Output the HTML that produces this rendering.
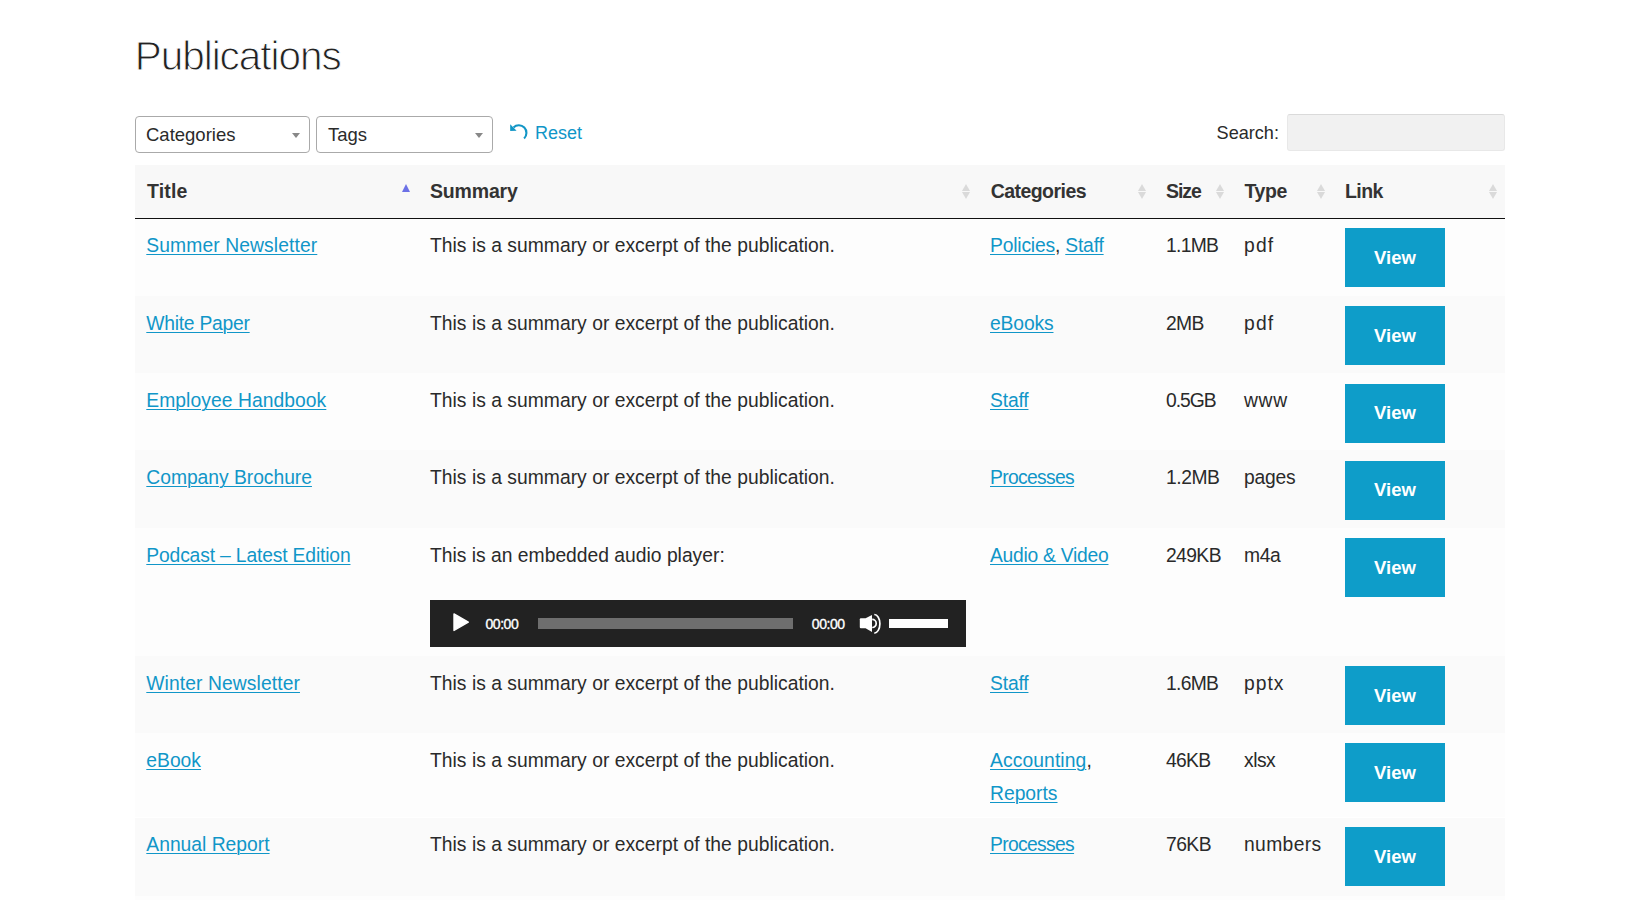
<!DOCTYPE html>
<html><head><meta charset="utf-8"><style>
html,body{margin:0;padding:0;background:#fff;width:1640px;height:900px;overflow:hidden;position:relative}
body{font-family:"Liberation Sans",sans-serif;color:#2a2a2a}
.ab{position:absolute}
.t{position:absolute;white-space:nowrap;line-height:1}
.h1{color:#222;-webkit-text-stroke:1px #fff}
.b{font-weight:bold;color:#333}
.w{color:#fff}
.lnk{color:#1096c8}
.u{color:#1096c8;text-decoration:underline;text-underline-offset:1.5px;text-decoration-thickness:1px}
.nou .u{text-decoration:none}
.sel{position:absolute;border:1px solid #aaa;border-radius:4px;background:#fff}
.inp{position:absolute;border:1px solid #e8e8e8;border-top-color:#dadada;border-radius:3px;background:#f1f1f1}
.arr{position:absolute;width:0;height:0;border-left:4.5px solid transparent;border-right:4.5px solid transparent;border-top:5.5px solid #888}
.btn{position:absolute;width:100px;height:59px;background:#0e9dc9}
</style></head><body>
<div class="t h1" style="left:134.8px;top:35.72px;font-size:40.5px;letter-spacing:-1.05px">Publications</div>
<div class="sel" style="left:135px;top:116px;width:173px;height:35px"></div>
<div class="sel" style="left:316px;top:116px;width:175px;height:35px"></div>
<div class="t " style="left:146px;top:125.94px;font-size:18.5px;">Categories</div>
<div class="t " style="left:328px;top:125.94px;font-size:18.5px;">Tags</div>
<div class="arr" style="left:292px;top:132.5px"></div>
<div class="arr" style="left:475px;top:132.5px"></div>
<svg class="ab" style="left:505px;top:118px" width="30" height="25" viewBox="0 0 30 25"><path d="M8.5 9.4 A7.6 7.6 0 1 1 19.1 20.4" fill="none" stroke="#1296c6" stroke-width="2.1"/><path d="M5.2 6.2 L5.2 12.9 L11.6 12.7 Z" fill="#1296c6"/></svg>
<div class="t lnk nou" style="left:535px;top:123.96px;font-size:18px;">Reset</div>
<div class="t " style="left:1216.6px;top:124.28px;font-size:18.1px;">Search:</div>
<div class="inp" style="left:1287px;top:113.7px;width:216px;height:35px"></div>
<div class="ab" style="left:135px;top:165.4px;width:1370px;height:52.6px;background:#f8f8f8"></div>
<div class="ab" style="left:135px;top:218px;width:1370px;height:1px;background:#111"></div>
<div class="t b" style="left:147px;top:181.99px;font-size:19.5px;letter-spacing:0.15px">Title</div>
<div class="t b" style="left:430px;top:181.99px;font-size:19.5px;letter-spacing:-0.17px">Summary</div>
<div class="t b" style="left:990.7px;top:181.99px;font-size:19.5px;letter-spacing:-0.55px">Categories</div>
<div class="t b" style="left:1166px;top:181.99px;font-size:19.5px;letter-spacing:-1.05px">Size</div>
<div class="t b" style="left:1244.4px;top:181.99px;font-size:19.5px;letter-spacing:-0.35px">Type</div>
<div class="t b" style="left:1345px;top:181.99px;font-size:19.5px;letter-spacing:-0.55px">Link</div>
<div class="ab" style="left:402.4px;top:184.4px;width:0;height:0;border-left:4.6px solid transparent;border-right:4.6px solid transparent;border-bottom:8px solid #6c71e6"></div>
<div class="ab" style="left:962.1px;top:183.5px;width:0;height:0;border-left:4.9px solid transparent;border-right:4.9px solid transparent;border-bottom:7px solid #dadada"></div>
<div class="ab" style="left:962.1px;top:192.3px;width:0;height:0;border-left:4.9px solid transparent;border-right:4.9px solid transparent;border-top:7px solid #dadada"></div>
<div class="ab" style="left:1137.8px;top:183.5px;width:0;height:0;border-left:4.9px solid transparent;border-right:4.9px solid transparent;border-bottom:7px solid #dadada"></div>
<div class="ab" style="left:1137.8px;top:192.3px;width:0;height:0;border-left:4.9px solid transparent;border-right:4.9px solid transparent;border-top:7px solid #dadada"></div>
<div class="ab" style="left:1216.1px;top:183.5px;width:0;height:0;border-left:4.9px solid transparent;border-right:4.9px solid transparent;border-bottom:7px solid #dadada"></div>
<div class="ab" style="left:1216.1px;top:192.3px;width:0;height:0;border-left:4.9px solid transparent;border-right:4.9px solid transparent;border-top:7px solid #dadada"></div>
<div class="ab" style="left:1317.1px;top:183.5px;width:0;height:0;border-left:4.9px solid transparent;border-right:4.9px solid transparent;border-bottom:7px solid #dadada"></div>
<div class="ab" style="left:1317.1px;top:192.3px;width:0;height:0;border-left:4.9px solid transparent;border-right:4.9px solid transparent;border-top:7px solid #dadada"></div>
<div class="ab" style="left:1489.1px;top:183.5px;width:0;height:0;border-left:4.9px solid transparent;border-right:4.9px solid transparent;border-bottom:7px solid #dadada"></div>
<div class="ab" style="left:1489.1px;top:192.3px;width:0;height:0;border-left:4.9px solid transparent;border-right:4.9px solid transparent;border-top:7px solid #dadada"></div>
<div class="ab" style="left:135px;top:219.4px;width:1370px;height:76.2px;background:#fdfdfd"></div>
<div class="t lnk" style="left:146.3px;top:236.26px;font-size:19.3px;letter-spacing:0.1px"><span class="u">Summer Newsletter</span></div>
<div class="t " style="left:430px;top:236.26px;font-size:19.3px;letter-spacing:0.02px">This is a summary or excerpt of the publication.</div>
<div class="t " style="left:990px;top:236.26px;font-size:19.3px;letter-spacing:-0.19px"><span class="u">Policies</span>, <span class="u">Staff</span></div>
<div class="t " style="left:1166px;top:236.26px;font-size:19.3px;letter-spacing:-0.72px">1.1MB</div>
<div class="t " style="left:1244px;top:236.26px;font-size:19.3px;letter-spacing:1.2px">pdf</div>
<div class="btn" style="left:1345px;top:228.4px"></div>
<div class="t b w" style="left:1374px;top:249.24px;font-size:18.5px;">View</div>
<div class="ab" style="left:135px;top:295.6px;width:1370px;height:77.4px;background:#fafafa"></div>
<div class="t lnk" style="left:146.3px;top:313.76px;font-size:19.3px;letter-spacing:-0.25px"><span class="u">White Paper</span></div>
<div class="t " style="left:430px;top:313.76px;font-size:19.3px;letter-spacing:0.02px">This is a summary or excerpt of the publication.</div>
<div class="t " style="left:990px;top:313.76px;font-size:19.3px;letter-spacing:-0.14px"><span class="u">eBooks</span></div>
<div class="t " style="left:1166px;top:313.76px;font-size:19.3px;letter-spacing:-0.7px">2MB</div>
<div class="t " style="left:1244px;top:313.76px;font-size:19.3px;letter-spacing:1.2px">pdf</div>
<div class="btn" style="left:1345px;top:305.9px"></div>
<div class="t b w" style="left:1374px;top:326.74px;font-size:18.5px;">View</div>
<div class="ab" style="left:135px;top:373px;width:1370px;height:77.2px;background:#fdfdfd"></div>
<div class="t lnk" style="left:146.3px;top:391.36px;font-size:19.3px;letter-spacing:0.06px"><span class="u">Employee Handbook</span></div>
<div class="t " style="left:430px;top:391.36px;font-size:19.3px;letter-spacing:0.02px">This is a summary or excerpt of the publication.</div>
<div class="t " style="left:990px;top:391.36px;font-size:19.3px;letter-spacing:-0.17px"><span class="u">Staff</span></div>
<div class="t " style="left:1166px;top:391.36px;font-size:19.3px;letter-spacing:-1.0px">0.5GB</div>
<div class="t " style="left:1244px;top:391.36px;font-size:19.3px;letter-spacing:0.7px">www</div>
<div class="btn" style="left:1345px;top:383.5px"></div>
<div class="t b w" style="left:1374px;top:404.34px;font-size:18.5px;">View</div>
<div class="ab" style="left:135px;top:450.2px;width:1370px;height:77.8px;background:#fafafa"></div>
<div class="t lnk" style="left:146.3px;top:468.46px;font-size:19.3px;letter-spacing:-0.03px"><span class="u">Company Brochure</span></div>
<div class="t " style="left:430px;top:468.46px;font-size:19.3px;letter-spacing:0.02px">This is a summary or excerpt of the publication.</div>
<div class="t " style="left:990px;top:468.46px;font-size:19.3px;letter-spacing:-0.66px"><span class="u">Processes</span></div>
<div class="t " style="left:1166px;top:468.46px;font-size:19.3px;letter-spacing:-0.45px">1.2MB</div>
<div class="t " style="left:1244px;top:468.46px;font-size:19.3px;letter-spacing:-0.25px">pages</div>
<div class="btn" style="left:1345px;top:460.6px"></div>
<div class="t b w" style="left:1374px;top:481.44px;font-size:18.5px;">View</div>
<div class="ab" style="left:135px;top:528px;width:1370px;height:127.8px;background:#fdfdfd"></div>
<div class="t lnk" style="left:146.3px;top:545.66px;font-size:19.3px;letter-spacing:-0.157px"><span class="u">Podcast – Latest Edition</span></div>
<div class="t " style="left:430px;top:545.66px;font-size:19.3px;">This is an embedded audio player:</div>
<div class="t " style="left:990px;top:545.66px;font-size:19.3px;letter-spacing:-0.26px"><span class="u">Audio &amp; Video</span></div>
<div class="t " style="left:1166px;top:545.66px;font-size:19.3px;letter-spacing:-0.6px">249KB</div>
<div class="t " style="left:1244px;top:545.66px;font-size:19.3px;letter-spacing:-0.4px">m4a</div>
<div class="btn" style="left:1345px;top:537.8px"></div>
<div class="t b w" style="left:1374px;top:558.64px;font-size:18.5px;">View</div>
<div class="ab" style="left:135px;top:655.8px;width:1370px;height:76.8px;background:#fafafa"></div>
<div class="t lnk" style="left:146.3px;top:673.66px;font-size:19.3px;letter-spacing:0.09px"><span class="u">Winter Newsletter</span></div>
<div class="t " style="left:430px;top:673.66px;font-size:19.3px;letter-spacing:0.02px">This is a summary or excerpt of the publication.</div>
<div class="t " style="left:990px;top:673.66px;font-size:19.3px;letter-spacing:-0.17px"><span class="u">Staff</span></div>
<div class="t " style="left:1166px;top:673.66px;font-size:19.3px;letter-spacing:-0.72px">1.6MB</div>
<div class="t " style="left:1244px;top:673.66px;font-size:19.3px;letter-spacing:1.0px">pptx</div>
<div class="btn" style="left:1345px;top:665.8px"></div>
<div class="t b w" style="left:1374px;top:686.64px;font-size:18.5px;">View</div>
<div class="ab" style="left:135px;top:732.6px;width:1370px;height:84.9px;background:#fdfdfd"></div>
<div class="t lnk" style="left:146.3px;top:751.06px;font-size:19.3px;"><span class="u">eBook</span></div>
<div class="t " style="left:430px;top:751.06px;font-size:19.3px;letter-spacing:0.02px">This is a summary or excerpt of the publication.</div>
<div class="t " style="left:990px;top:751.06px;font-size:19.3px;letter-spacing:0.1px"><span class="u">Accounting</span>,</div>
<div class="t " style="left:990px;top:784.06px;font-size:19.3px;"><span class="u">Reports</span></div>
<div class="t " style="left:1166px;top:751.06px;font-size:19.3px;letter-spacing:-0.7px">46KB</div>
<div class="t " style="left:1244px;top:751.06px;font-size:19.3px;letter-spacing:-0.5px">xlsx</div>
<div class="btn" style="left:1345px;top:743.2px"></div>
<div class="t b w" style="left:1374px;top:764.04px;font-size:18.5px;">View</div>
<div class="ab" style="left:135px;top:817.5px;width:1370px;height:78.5px;background:#fafafa"></div>
<div class="t lnk" style="left:146.3px;top:835.16px;font-size:19.3px;"><span class="u">Annual Report</span></div>
<div class="t " style="left:430px;top:835.16px;font-size:19.3px;letter-spacing:0.02px">This is a summary or excerpt of the publication.</div>
<div class="t " style="left:990px;top:835.16px;font-size:19.3px;letter-spacing:-0.66px"><span class="u">Processes</span></div>
<div class="t " style="left:1166px;top:835.16px;font-size:19.3px;letter-spacing:-0.56px">76KB</div>
<div class="t " style="left:1244px;top:835.16px;font-size:19.3px;letter-spacing:0.35px">numbers</div>
<div class="btn" style="left:1345px;top:827.3px"></div>
<div class="t b w" style="left:1374px;top:848.14px;font-size:18.5px;">View</div>
<div class="ab" style="left:135px;top:896px;width:1370px;height:4px;background:#fdfdfd"></div>
<div class="ab" style="left:430px;top:600px;width:536px;height:46.7px;background:#222"></div>
<svg class="ab" style="left:450px;top:610px" width="24" height="24" viewBox="0 0 24 24"><path d="M4 3.9 L18.3 12.1 L4 20.5 Z" fill="#fff" stroke="#fff" stroke-width="1.4" stroke-linejoin="round"/></svg>
<div class="ab" style="left:537.7px;top:617.8px;width:255.5px;height:11.5px;background:#6e6e6e"></div>
<div class="ab" style="left:889px;top:618.7px;width:59px;height:9.5px;background:#fff"></div>
<div class="t w" style="left:485.5px;top:616.95px;font-size:14px;letter-spacing:-0.45px;-webkit-text-stroke:0.35px #fff">00:00</div>
<div class="t w" style="left:811.8px;top:616.95px;font-size:14px;letter-spacing:-0.45px;-webkit-text-stroke:0.35px #fff">00:00</div>
<svg class="ab" style="left:859px;top:612px" width="24" height="24" viewBox="0 0 24 24"><rect x="0.8" y="6.3" width="6.5" height="10" rx="1" fill="#fff"/><path d="M6.6 6.3 L13 2.9 L13 20 L6.6 16.3 Z" fill="#fff"/><path d="M13.2 7.3 A4 4.1 0 0 1 13.2 15.5" fill="none" stroke="#fff" stroke-width="1.7"/><path d="M15.3 2.5 A5.6 9.3 0 0 1 15.3 21.1" fill="none" stroke="#fff" stroke-width="1.7"/></svg>
</body></html>
